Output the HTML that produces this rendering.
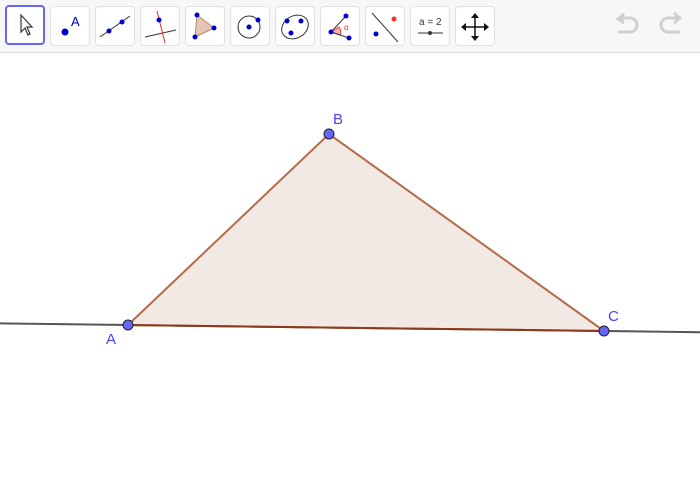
<!DOCTYPE html>
<html><head><style>
body{margin:0;width:700px;height:500px;background:#fff;overflow:hidden;font-family:"Liberation Sans",sans-serif;position:relative}
.tb{position:absolute;left:0;top:0;width:700px;height:52px;background:#f7f7f7;border-bottom:1px solid #dcdcdc}
.b{position:absolute;top:6px;width:38px;height:38px;background:#fff;border:1px solid #e0e0e0;border-radius:4px}
.b svg{position:absolute;left:0;top:0}
</style></head><body>
<div class="tb">
<div class="b" style="left:5px;border:2px solid #6666ff;width:36px;height:36px;top:5px"><svg width="36" height="36"><path d="M14 8 L14 25 L18 21 L21 28 L23 27 L20 20 L25 20 Z" fill="#fff" stroke="#333" stroke-width="1.2"/></svg></div>
<div class="b" style="left:50px"><svg width="38" height="38"><circle cx="14" cy="25" r="3.5" fill="#00c"/><text x="20" y="19" font-size="13" fill="#00c" font-family="Liberation Sans">A</text></svg></div>
<div class="b" style="left:95px"><svg width="38" height="38"><line x1="4" y1="30" x2="34" y2="9" stroke="#333"/><circle cx="13" cy="24" r="2.5" fill="#00c"/><circle cx="26" cy="15" r="2.5" fill="#00c"/></svg></div>
<div class="b" style="left:140px"><svg width="38" height="38"><line x1="4" y1="30" x2="35" y2="23" stroke="#333"/><line x1="16" y1="4" x2="24" y2="36" stroke="#e33"/><circle cx="18" cy="13" r="2.5" fill="#00c"/></svg></div>
<div class="b" style="left:185px"><svg width="38" height="38"><path d="M11 8 L28 21 L9 30 Z" fill="#e5c5b5" stroke="#b86" stroke-width="1"/><circle cx="11" cy="8" r="2.5" fill="#00c"/><circle cx="28" cy="21" r="2.5" fill="#00c"/><circle cx="9" cy="30" r="2.5" fill="#00c"/></svg></div>
<div class="b" style="left:230px"><svg width="38" height="38"><circle cx="18" cy="20" r="11" fill="none" stroke="#333"/><circle cx="18" cy="20" r="2.5" fill="#00c"/><circle cx="27" cy="13" r="2.5" fill="#00c"/></svg></div>
<div class="b" style="left:275px"><svg width="38" height="38"><ellipse cx="19" cy="20" rx="14" ry="11" transform="rotate(-30 19 20)" fill="none" stroke="#333"/><circle cx="11" cy="14" r="2.5" fill="#00c"/><circle cx="25" cy="14" r="2.5" fill="#00c"/><circle cx="15" cy="26" r="2.5" fill="#00c"/></svg></div>
<div class="b" style="left:320px"><svg width="38" height="38"><path d="M10 25 L18 20 A8 8 0 0 1 19 28 Z" fill="#f5b5b5" stroke="#e33"/><line x1="10" y1="25" x2="25" y2="9" stroke="#333"/><line x1="10" y1="25" x2="28" y2="31" stroke="#333"/><circle cx="10" cy="25" r="2.5" fill="#00c"/><circle cx="25" cy="9" r="2.5" fill="#00c"/><circle cx="28" cy="31" r="2.5" fill="#00c"/><text x="23" y="23" font-size="8" fill="#e33">α</text></svg></div>
<div class="b" style="left:365px"><svg width="38" height="38"><line x1="6" y1="6" x2="32" y2="35" stroke="#333"/><circle cx="10" cy="27" r="2.5" fill="#00c"/><circle cx="28" cy="12" r="2.5" fill="#e33"/></svg></div>
<div class="b" style="left:410px"><svg width="38" height="38"><text x="8" y="18" font-size="10" fill="#333">a = 2</text><line x1="7" y1="26" x2="32" y2="26" stroke="#333"/><circle cx="19" cy="26" r="2" fill="#333"/></svg></div>
<div class="b" style="left:455px"><svg width="38" height="38"><path d="M19 8 V32 M7 20 H31" stroke="#111" stroke-width="1.5"/><path d="M19 6 L15 11 H23 Z M19 34 L15 29 H23 Z M5 20 L10 16 V24 Z M33 20 L28 16 V24 Z" fill="#111"/></svg></div>
<svg style="position:absolute;left:610px;top:10px" width="80" height="30"><path d="M10 8 H20 A7 7 0 0 1 20 22 H8 M14 4 L8 9 L14 13" fill="none" stroke="#d0d0d0" stroke-width="3"/><path d="M70 8 H58 A7 7 0 0 0 58 22 H70 M64 3 L70 8 L64 13" fill="none" stroke="#d0d0d0" stroke-width="3"/><path d="M7 8.5 L14 3 V14 Z" fill="#d0d0d0"/><path d="M72 8 L65 2.5 V13.5 Z" fill="#d0d0d0"/></svg>
</div>
<svg style="position:absolute;left:0;top:0" width="700" height="500">
<line x1="0" y1="323.4" x2="700" y2="332.2" stroke="#555" stroke-width="2"/>
<polygon points="128,325 329,134 604,331" fill="#f3e9e4" stroke="#b56a48" stroke-width="2"/>
<line x1="128" y1="325" x2="604" y2="331" stroke="#8a3a1a" stroke-width="2"/>
<circle cx="128" cy="325" r="5" fill="#6666ff" stroke="#222" stroke-width="1"/>
<circle cx="329" cy="134" r="5" fill="#6666ff" stroke="#222" stroke-width="1"/>
<circle cx="604" cy="331" r="5" fill="#6666ff" stroke="#222" stroke-width="1"/>
<text x="106" y="344" font-size="15" fill="#4444ff" font-family="Liberation Sans">A</text>
<text x="333" y="124" font-size="15" fill="#4444ff" font-family="Liberation Sans">B</text>
<text x="608" y="321" font-size="15" fill="#4444ff" font-family="Liberation Sans">C</text>
</svg>
</body></html>
